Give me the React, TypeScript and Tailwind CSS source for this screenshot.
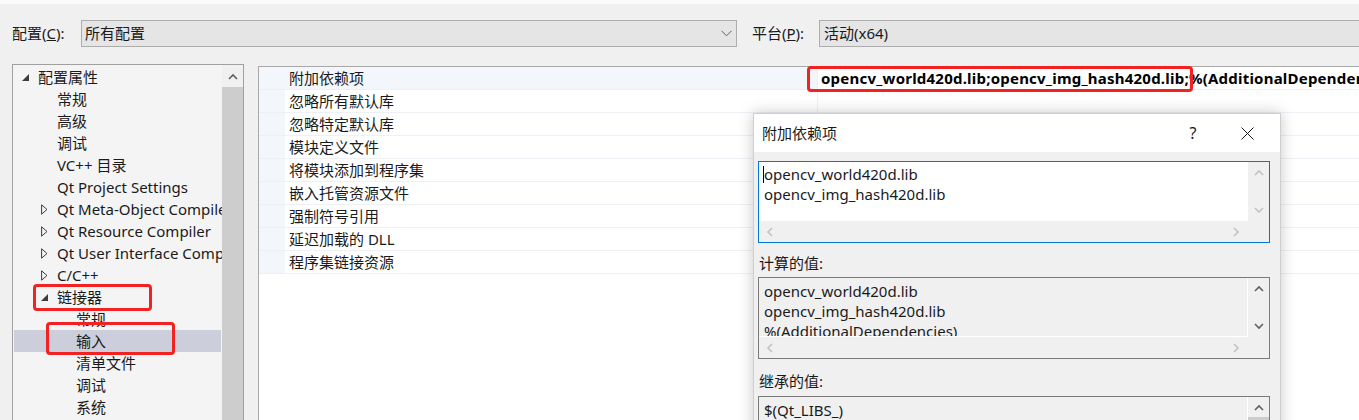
import React from "react";

type Dir = "up" | "down" | "left" | "right";

function Arrow({ dir, dark }: { dir: Dir; dark?: boolean }) {
  const pts: Record<Dir, string> = {
    up: "1,6 5,2 9,6",
    down: "1,2 5,6 9,2",
    left: "6,1 2,5 6,9",
    right: "2,1 6,5 2,9",
  };
  const vertical = dir === "up" || dir === "down";
  return (
    <svg
      width={vertical ? 10 : 8}
      height={vertical ? 8 : 10}
      viewBox={vertical ? "0 0 10 8" : "0 0 8 10"}
      className="block"
    >
      <polyline
        points={pts[dir]}
        fill="none"
        stroke={dark ? "#606060" : "#c2c2c2"}
        strokeWidth="1.6"
      />
    </svg>
  );
}

function Expanded() {
  return (
    <svg width="7" height="7" viewBox="0 0 7 7" className="block">
      <polygon points="7,0 7,7 0,7" fill="#3c3c3c" />
    </svg>
  );
}

function Collapsed() {
  return (
    <svg width="7" height="11" viewBox="0 0 7 11" className="block">
      <polygon points="0.6,0.8 6,5.5 0.6,10.2" fill="none" stroke="#3c3c3c" strokeWidth="1" />
    </svg>
  );
}

const tree = [
  { label: "配置属性", level: 0, state: "open" },
  { label: "常规", level: 1 },
  { label: "高级", level: 1 },
  { label: "调试", level: 1 },
  { label: "VC++ 目录", level: 1 },
  { label: "Qt Project Settings", level: 1 },
  { label: "Qt Meta-Object Compiler", level: 1, state: "closed" },
  { label: "Qt Resource Compiler", level: 1, state: "closed" },
  { label: "Qt User Interface Compiler", level: 1, state: "closed" },
  { label: "C/C++", level: 1, state: "closed" },
  { label: "链接器", level: 1, state: "open" },
  { label: "常规", level: 2 },
  { label: "输入", level: 2, selected: true },
  { label: "清单文件", level: 2 },
  { label: "调试", level: 2 },
  { label: "系统", level: 2 },
];

const props = [
  "附加依赖项",
  "忽略所有默认库",
  "忽略特定默认库",
  "模块定义文件",
  "将模块添加到程序集",
  "嵌入托管资源文件",
  "强制符号引用",
  "延迟加载的 DLL",
  "程序集链接资源",
];

function EditBox({
  lines,
  active,
  upDark,
  downDark,
}: {
  lines: string[];
  active?: boolean;
  upDark?: boolean;
  downDark?: boolean;
}) {
  return (
    <div
      className={`w-[512px] h-[82px] border flex flex-col ${
        active ? "border-[#0078d7]" : "border-[#7a7a7a]"
      }`}
    >
      <div className="flex h-[59px]">
        <div
          className={`flex-1 overflow-hidden pl-[5px] ${
            active ? "bg-white pt-[2px]" : "bg-[#f0f0f0] pt-[3px] border-r border-b border-white"
          }`}
        >
          {lines.map((l, i) => (
            <div key={i} className="h-[20px] leading-[20px] whitespace-nowrap relative">
              {active && i === 0 && (
                <span className="absolute left-[-1px] top-[2px] w-px h-[17px] bg-black" />
              )}
              {l}
            </div>
          ))}
        </div>
        <div className="w-[21px] bg-[#f0f0f0] flex flex-col items-center justify-between py-[7px]">
          <Arrow dir="up" dark={upDark} />
          <Arrow dir="down" dark={downDark} />
        </div>
      </div>
      <div className="h-[21px] bg-[#f0f0f0] flex items-center justify-between pl-[7px] pr-[29px]">
        <Arrow dir="left" />
        <Arrow dir="right" />
      </div>
    </div>
  );
}

export default function App() {
  return (
    <div className="relative w-[1359px] h-[420px] overflow-hidden bg-[#f0f0f0] text-[15px] text-[#1a1a1a] font-['Noto_Sans','Noto_Sans_CJK_SC',sans-serif]">
      <div className="h-[4px] bg-[#fbfbfb]" />

      {/* configuration / platform bar */}
      <div className="mt-[16px] flex h-[27px] items-center whitespace-nowrap">
        <div className="w-[81px] shrink-0 pl-[12px]">
          配置(<span className="underline">C</span>):
        </div>
        <div className="w-[656px] shrink-0 h-[27px] border border-[#adadad] bg-[#e5e5e5] flex items-center pl-[3px] pr-[4px]">
          <span className="flex-1">所有配置</span>
          <svg width="11" height="7" viewBox="0 0 11 7" className="block">
            <polyline points="0.5,0.8 5.5,5.8 10.5,0.8" fill="none" stroke="#606060" strokeWidth="1" />
          </svg>
        </div>
        <div className="w-[82px] shrink-0 pl-[15px]">
          平台(<span className="underline">P</span>):
        </div>
        <div className="w-[560px] shrink-0 h-[27px] border border-[#adadad] bg-[#e5e5e5] flex items-center pl-[4px]">
          活动(x64)
        </div>
      </div>

      <div className="mt-[17px] flex items-start">
        {/* tree */}
        <div className="ml-[12px] w-[232px] shrink-0 h-[370px] border border-[#a0a0a0] bg-[#f4f4f4] flex">
          <div className="w-[209px] p-[1px] overflow-hidden">
            {tree.map((r, i) => (
              <div
                key={i}
                className={`flex h-[22px] items-center whitespace-nowrap ${r.selected ? "bg-[#cccedb]" : ""}`}
              >
                <div
                  className={`shrink-0 ${
                    r.level === 0 ? "w-[6px]" : r.level === 1 ? "w-[25px]" : "w-[44px]"
                  }`}
                />
                <div className="w-[17px] shrink-0 flex items-center pl-[2px]">
                  {r.state === "open" && <Expanded />}
                  {r.state === "closed" && <Collapsed />}
                </div>
                <span className="ml-[1px]">{r.label}</span>
              </div>
            ))}
          </div>
          <div className="w-[21px] flex flex-col bg-[#f0f0f0]">
            <div className="h-[22px] flex items-center justify-center pt-[2px]">
              <Arrow dir="up" dark />
            </div>
            <div className="flex-1 bg-[#cdcdcd]" />
          </div>
        </div>

        {/* property grid */}
        <div className="ml-[14px] mt-[2px] flex-1 h-[360px] border-l border-t border-[#a9a9a9] bg-white">
          {props.map((p, i) => (
            <div key={i} className="flex h-[23px] border-b border-[#eef0f5] whitespace-nowrap">
              <div className="w-[26px] shrink-0 bg-[#f3f6fb]" />
              <div
                className={`w-[533px] shrink-0 pl-[4px] leading-[22px] border-r border-[#eef0f5] ${
                  i === 0 ? "bg-[#f3f6fb]" : ""
                }`}
              >
                {p}
              </div>
              <div className="flex-1 pl-[3px] leading-[22px] font-bold tracking-[0.22px] text-black overflow-hidden">
                {i === 0 ? "opencv_world420d.lib;opencv_img_hash420d.lib;%(AdditionalDependencies)" : ""}
              </div>
            </div>
          ))}
        </div>
      </div>

      {/* dialog */}
      <div className="absolute left-[753px] top-[113px] w-[528px] h-[330px] bg-[#f0f0f0] border border-[#cfcfcf] shadow-[0_0_14px_rgba(0,0,0,0.22)]">
        <div className="h-[38px] bg-white flex items-center pl-[8px]">
          <span className="flex-1">附加依赖项</span>
          <span className="w-[20px] text-center text-[16px] mr-[38px]">?</span>
          <svg width="13" height="13" viewBox="0 0 13 13" className="block mr-[26px]">
            <path d="M0.5 0.5 L12.5 12.5 M12.5 0.5 L0.5 12.5" stroke="#1a1a1a" strokeWidth="1" />
          </svg>
        </div>
        <div className="pl-[4px] pt-[9px]">
          <EditBox lines={["opencv_world420d.lib", "opencv_img_hash420d.lib"]} active />
          <div className="mt-[10px] h-[20px] leading-[20px] pl-[1px]">计算的值:</div>
          <div className="mt-[4px]">
            <EditBox
              lines={["opencv_world420d.lib", "opencv_img_hash420d.lib", "%(AdditionalDependencies)"]}
              upDark
              downDark
            />
          </div>
          <div className="mt-[12px] h-[20px] leading-[20px] pl-[1px]">继承的值:</div>
          <div className="mt-[5px] w-[512px] h-[82px] border border-[#7a7a7a] flex">
            <div className="flex-1 pl-[5px] pt-[3px] border-r border-white">
              <div className="h-[20px] leading-[20px]">$(Qt_LIBS_)</div>
            </div>
            <div className="w-[21px] flex flex-col">
              <div className="h-[20px] flex items-center justify-center pt-[2px]">
                <Arrow dir="up" dark />
              </div>
              <div className="flex-1 bg-[#cdcdcd]" />
            </div>
          </div>
        </div>
      </div>

      {/* red annotation boxes */}
      <div className="absolute left-[33px] top-[284px] w-[119px] h-[27px] border-[3px] border-[#f22222] rounded-[4px]" />
      <div className="absolute left-[46px] top-[322px] w-[129px] h-[33px] border-[3px] border-[#f22222] rounded-[4px]" />
      <div className="absolute left-[807px] top-[66px] w-[386px] h-[26px] border-[3px] border-[#f22222] rounded-[4px]" />
    </div>
  );
}
